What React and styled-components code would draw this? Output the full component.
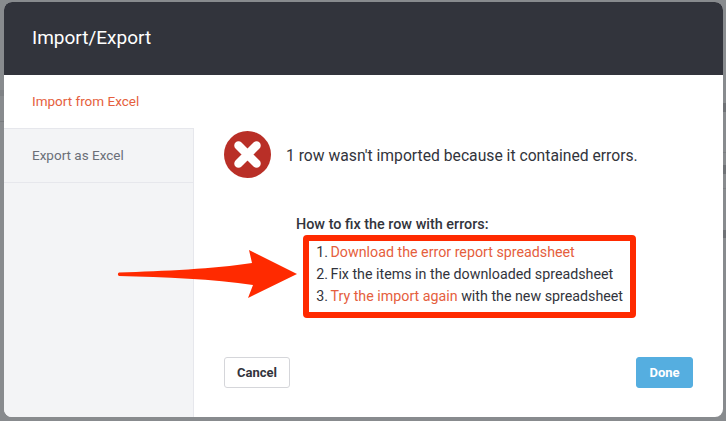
import React from 'react'
import styled, { createGlobalStyle } from 'styled-components'

const GlobalStyle = createGlobalStyle`
  html, body {
    margin: 0;
    padding: 0;
    width: 726px;
    height: 421px;
    overflow: hidden;
    background: #888b8e;
    font-family: Roboto, "Liberation Sans", sans-serif;
  }
  * { box-sizing: border-box; }
`

const Backdrop = styled.div`
  position: relative;
  width: 726px;
  height: 421px;
  padding: 2px 3px 4px 4px;
`

// bits of the page behind the dialog that peek out at the edges
const PageMark = styled.i`
  position: absolute;
  top: ${p => p.$top}px;
  height: ${p => p.$height}px;
  ${p => (p.$left ? 'left: 0; width: 4px;' : 'right: 0; width: 3px;')}
  background: ${p => p.$color};
`

const Modal = styled.div`
  position: relative;
  width: 719px;
  height: 415px;
  display: flex;
  flex-direction: column;
  background: #fff;
  border-radius: 8px;
  overflow: hidden;
`

const Header = styled.header`
  height: 73px;
  flex: none;
  display: flex;
  align-items: center;
  padding: 0 0 3px 28px;
  background: #32343c;
  color: #fff;
  font-size: 19px;
`

const Body = styled.div`
  flex: 1;
  display: flex;
`

const Sidebar = styled.nav`
  width: 190px;
  flex: none;
  background: #f3f4f6;
  border-right: 1px solid #e6e7ec;
`

const Tab = styled.div`
  height: 54px;
  display: flex;
  align-items: center;
  padding: 0 0 2px 28px;
  font-size: 13.5px;
  color: ${p => (p.$active ? '#e5603d' : '#6b6f78')};
  background: ${p => (p.$active ? '#fff' : 'transparent')};
  border-bottom: 1px solid #e6e7ec;
  margin-right: ${p => (p.$active ? '-1px' : '0')};
`

const Content = styled.main`
  flex: 1;
  display: flex;
  flex-direction: column;
  padding: 56px 30px 0 30px;
`

const Message = styled.div`
  display: flex;
  align-items: center;
  gap: 15px;
  font-size: 15.7px;
  color: #32343c;
`

const MessageText = styled.span`
  padding-top: 2px;
  white-space: nowrap;
`

const Help = styled.section`
  margin: 38px 0 0 72px;
  color: #32343c;
  font-size: 14.25px;
`

const HelpTitle = styled.div`
  font-weight: 500;
  font-size: 14.4px;
  line-height: 18px;
`

const StepBox = styled.ol`
  list-style: none;
  margin: 1px 0 0 7px;
  padding: 0 0 0 5px;
  width: 333px;
  height: 83px;
  border: 6px solid #ff2a00;
  border-radius: 4px;
  display: flex;
  flex-direction: column;
`

const Step = styled.li`
  line-height: 22px;
  white-space: nowrap;
`

const StepNumber = styled.span`
  display: inline-block;
  width: 14px;
  margin-right: 2.5px;
  text-align: right;
`

const StepLink = styled.span`
  color: #e5603d;
`

const Actions = styled.footer`
  margin-top: 39px;
  display: flex;
  justify-content: space-between;
`

const Button = styled.button`
  width: ${p => (p.$primary ? '57px' : '66px')};
  height: 31px;
  border-radius: 3px;
  border: 1px solid ${p => (p.$primary ? '#55aee0' : '#d5d6da')};
  background: ${p => (p.$primary ? '#55aee0' : '#fff')};
  color: ${p => (p.$primary ? '#fff' : '#32343c')};
  font-family: inherit;
  font-size: 13px;
  font-weight: 700;
  padding: 0;
`

const ArrowMark = styled.svg`
  position: absolute;
  left: 110px;
  top: 246px;
`

const ErrorIcon = () => (
  <svg width="47" height="47" viewBox="0 0 47 47">
    <circle cx="23.5" cy="23.5" r="23.5" fill="#b92f27" />
    <path d="M14.5 14.5 L32.5 32.5 M32.5 14.5 L14.5 32.5" stroke="#fff" strokeWidth="8.5" strokeLinecap="round" />
  </svg>
)

export default function App() {
  return (
    <>
      <GlobalStyle />
      <Backdrop>
        <PageMark $left $top={90} $height={6} $color="#7f8285" />
        <PageMark $left $top={121} $height={1} $color="#7a7d80" />
        <PageMark $top={103} $height={9} $color="#6f7276" />
        <PageMark $top={152} $height={1} $color="#7c7f82" />
        <PageMark $top={165} $height={9} $color="#6f7276" />
        <PageMark $top={188} $height={1} $color="#7c7f82" />
        <PageMark $top={230} $height={8} $color="#6f7276" />
        <Modal>
          <Header>Import/Export</Header>
          <Body>
            <Sidebar>
              <Tab $active>Import from Excel</Tab>
              <Tab>Export as Excel</Tab>
            </Sidebar>
            <Content>
              <Message>
                <ErrorIcon />
                <MessageText>1 row wasn't imported because it contained errors.</MessageText>
              </Message>
              <Help>
                <HelpTitle>How to fix the row with errors:</HelpTitle>
                <StepBox>
                  <Step><StepNumber>1.</StepNumber><StepLink>Download the error report spreadsheet</StepLink></Step>
                  <Step><StepNumber>2.</StepNumber>Fix the items in the downloaded spreadsheet</Step>
                  <Step><StepNumber>3.</StepNumber><StepLink>Try the import again</StepLink> with the new spreadsheet</Step>
                </StepBox>
              </Help>
              <Actions>
                <Button>Cancel</Button>
                <Button $primary>Done</Button>
              </Actions>
            </Content>
          </Body>
          <ArrowMark width="190" height="56" viewBox="0 0 190 56">
            <path d="M5 24.5 C50 23 100 21 138 15 L135 2 L183 26 L134 50 L139 37 C100 31 50 29 5 28 C3.5 27 3.5 25.5 5 24.5 Z" fill="#ff2a00" />
          </ArrowMark>
        </Modal>
      </Backdrop>
    </>
  )
}
